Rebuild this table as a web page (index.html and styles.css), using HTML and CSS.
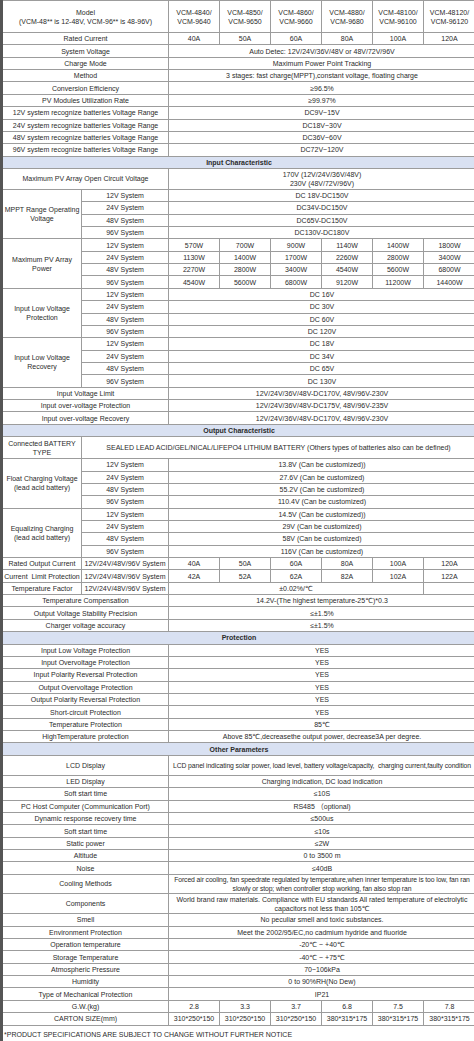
FILE: index.html
```
<!DOCTYPE html>
<html lang="en">
<head>
<meta charset="utf-8">
<title>VCM MPPT Controller Specifications</title>
<link rel="stylesheet" href="styles.css">
</head>
<body>
<table class="spec">
<colgroup>
<col class="c-a"><col class="c-b">
<col class="c-v"><col class="c-v"><col class="c-v"><col class="c-v"><col class="c-v"><col class="c-v2">
</colgroup>
<tbody>
<tr class="r-model"><td colspan="2">Model<br>(VCM-48** is 12-48V, VCM-96** is 48-96V)</td><td>VCM-4840/<br>VCM-9640</td><td>VCM-4850/<br>VCM-9650</td><td>VCM-4860/<br>VCM-9660</td><td>VCM-4880/<br>VCM-9680</td><td>VCM-48100/<br>VCM-96100</td><td>VCM-48120/<br>VCM-96120</td></tr>
<tr><td colspan="2">Rated Current</td><td>40A</td><td>50A</td><td>60A</td><td>80A</td><td>100A</td><td>120A</td></tr>
<tr><td colspan="2">System Voltage</td><td colspan="6">Auto Detec: 12V/24V/36V/48V or 48V/72V/96V</td></tr>
<tr><td colspan="2">Charge Mode</td><td colspan="6">Maximum Power Point Tracking</td></tr>
<tr><td colspan="2">Method</td><td colspan="6">3 stages: fast charge(MPPT),constant voltage, floating charge</td></tr>
<tr><td colspan="2">Conversion Efficiency</td><td colspan="6">≥96.5%</td></tr>
<tr><td colspan="2">PV Modules Utilization Rate</td><td colspan="6">≥99.97%</td></tr>
<tr><td colspan="2">12V system recognize batteries Voltage Range</td><td colspan="6">DC9V~15V</td></tr>
<tr><td colspan="2">24V system recognize batteries Voltage Range</td><td colspan="6">DC18V~30V</td></tr>
<tr><td colspan="2">48V system recognize batteries Voltage Range</td><td colspan="6">DC36V~60V</td></tr>
<tr><td colspan="2">96V system recognize batteries Voltage Range</td><td colspan="6">DC72V~120V</td></tr>
<tr class="sec"><td colspan="8">Input Characteristic</td></tr>
<tr class="r-21"><td colspan="2">Maximum PV Array Open Circuit Voltage</td><td colspan="6">170V (12V/24V/36V/48V)<br>230V (48V/72V/96V)</td></tr>
<tr><td rowspan="4">MPPT Range Operating<br>Voltage</td><td>12V System</td><td colspan="6">DC 18V-DC150V</td></tr>
<tr><td>24V System</td><td colspan="6">DC34V-DC150V</td></tr>
<tr><td>48V System</td><td colspan="6">DC65V-DC150V</td></tr>
<tr><td>96V System</td><td colspan="6">DC130V-DC180V</td></tr>
<tr><td rowspan="4">Maximum PV Array<br>Power</td><td>12V System</td><td>570W</td><td>700W</td><td>900W</td><td>1140W</td><td>1400W</td><td>1800W</td></tr>
<tr><td>24V System</td><td>1130W</td><td>1400W</td><td>1700W</td><td>2260W</td><td>2800W</td><td>3400W</td></tr>
<tr><td>48V System</td><td>2270W</td><td>2800W</td><td>3400W</td><td>4540W</td><td>5600W</td><td>6800W</td></tr>
<tr><td>96V System</td><td>4540W</td><td>5600W</td><td>6800W</td><td>9120W</td><td>11200W</td><td>14400W</td></tr>
<tr><td rowspan="4">Input Low Voltage<br>Protection</td><td>12V System</td><td colspan="6">DC 16V</td></tr>
<tr><td>24V System</td><td colspan="6">DC 30V</td></tr>
<tr><td>48V System</td><td colspan="6">DC 60V</td></tr>
<tr><td>96V System</td><td colspan="6">DC 120V</td></tr>
<tr><td rowspan="4">Input Low Voltage<br>Recovery</td><td>12V System</td><td colspan="6">DC 18V</td></tr>
<tr><td>24V System</td><td colspan="6">DC 34V</td></tr>
<tr><td>48V System</td><td colspan="6">DC 65V</td></tr>
<tr><td>96V System</td><td colspan="6">DC 130V</td></tr>
<tr><td colspan="2">Input Voltage Limit</td><td colspan="6">12V/24V/36V/48V-DC170V, 48V/96V-230V</td></tr>
<tr><td colspan="2">Input over-voltage Protection</td><td colspan="6">12V/24V/36V/48V-DC175V, 48V/96V-235V</td></tr>
<tr><td colspan="2">Input over-voltage Recovery</td><td colspan="6">12V/24V/36V/48V-DC170V, 48V/96V-230V</td></tr>
<tr class="sec"><td colspan="8">Output Characteristic</td></tr>
<tr class="r-22"><td>Connected BATTERY<br>TYPE</td><td colspan="7">SEALED LEAD ACID/GEL/NICAL/LIFEPO4 LITHIUM BATTERY (Others types of batteries also can be defined)</td></tr>
<tr><td rowspan="4">Float Charging Voltage<br>(lead acid battery)</td><td>12V System</td><td colspan="6">13.8V (Can be customized))</td></tr>
<tr><td>24V System</td><td colspan="6">27.6V (Can be customized)</td></tr>
<tr><td>48V System</td><td colspan="6">55.2V (Can be customized)</td></tr>
<tr><td>96V System</td><td colspan="6">110.4V (Can be customized)</td></tr>
<tr><td rowspan="4">Equalizing Charging<br>(lead acid battery)</td><td>12V System</td><td colspan="6">14.5V (Can be customized))</td></tr>
<tr><td>24V System</td><td colspan="6">29V (Can be customized)</td></tr>
<tr><td>48V System</td><td colspan="6">58V (Can be customized)</td></tr>
<tr><td>96V System</td><td colspan="6">116V (Can be customized)</td></tr>
<tr><td>Rated Output Current</td><td>12V/24V/48V/96V System</td><td>40A</td><td>50A</td><td>60A</td><td>80A</td><td>100A</td><td>120A</td></tr>
<tr><td>Current&nbsp; Limit Protection</td><td>12V/24V/48V/96V System</td><td>42A</td><td>52A</td><td>62A</td><td>82A</td><td>102A</td><td>122A</td></tr>
<tr><td>Temperature Factor</td><td>12V/24V/48V/96V System</td><td colspan="5">±0.02%/℃</td><td></td></tr>
<tr><td colspan="2">Temperature Compensation</td><td colspan="6">14.2V-(The highest temperature-25℃)*0.3</td></tr>
<tr><td colspan="2">Output Voltage Stability Precision</td><td colspan="6">≤±1.5%</td></tr>
<tr><td colspan="2">Charger voltage accuracy</td><td colspan="6">≤±1.5%</td></tr>
<tr class="sec"><td colspan="8">Protection</td></tr>
<tr><td colspan="2">Input Low Voltage Protection</td><td colspan="6">YES</td></tr>
<tr><td colspan="2">Input Overvoltage Protection</td><td colspan="6">YES</td></tr>
<tr><td colspan="2">Input Polarity Reversal Protection</td><td colspan="6">YES</td></tr>
<tr><td colspan="2">Output Overvoltage Protection</td><td colspan="6">YES</td></tr>
<tr><td colspan="2">Output Polarity Reversal Protection</td><td colspan="6">YES</td></tr>
<tr><td colspan="2">Short-circuit Protection</td><td colspan="6">YES</td></tr>
<tr><td colspan="2">Temperature Protection</td><td colspan="6">85℃</td></tr>
<tr><td colspan="2">HighTemperature protection</td><td colspan="6">Above 85℃,decreasethe output power, decrease3A per degree.</td></tr>
<tr class="sec"><td colspan="8">Other Parameters</td></tr>
<tr class="r-20"><td colspan="2">LCD Display</td><td colspan="6" class="tight">LCD panel indicating solar power, load level, battery voltage/capacity,&nbsp; charging current,faulty condition</td></tr>
<tr><td colspan="2">LED Display</td><td colspan="6">Charging indication, DC load indication</td></tr>
<tr><td colspan="2">Soft start time</td><td colspan="6">≤10S</td></tr>
<tr><td colspan="2">PC Host Computer (Communication Port)</td><td colspan="6">RS485 （optional)</td></tr>
<tr><td colspan="2">Dynamic response recovery time</td><td colspan="6">≤500us</td></tr>
<tr><td colspan="2">Soft start time</td><td colspan="6">≤10s</td></tr>
<tr><td colspan="2">Static power</td><td colspan="6">≤2W</td></tr>
<tr><td colspan="2">Altitude</td><td colspan="6">0 to 3500 m</td></tr>
<tr><td colspan="2">Noise</td><td colspan="6">≤40dB</td></tr>
<tr class="r-19"><td colspan="2">Cooling Methods</td><td colspan="6" class="tight">Forced air cooling, fan speedrate regulated by temperature,when inner temperature is too low, fan ran<br>slowly or stop; when controller stop working, fan also stop ran</td></tr>
<tr class="r-20"><td colspan="2">Components</td><td colspan="6">World brand raw materials. Compliance with EU standards All rated temperature of electrolytic<br>capacitors not less than 105℃</td></tr>
<tr><td colspan="2">Smell</td><td colspan="6">No peculiar smell and toxic substances.</td></tr>
<tr><td colspan="2">Environment Protection</td><td colspan="6">Meet the 2002/95/EC,no cadmium hydride and fluoride</td></tr>
<tr><td colspan="2">Operation temperature</td><td colspan="6">-20℃ ~ +40℃</td></tr>
<tr><td colspan="2">Storage Temperature</td><td colspan="6">-40℃ ~ +75℃</td></tr>
<tr><td colspan="2">Atmospheric Pressure</td><td colspan="6">70~106kPa</td></tr>
<tr><td colspan="2">Humidity</td><td colspan="6">0 to 90%RH(No Dew)</td></tr>
<tr><td colspan="2">Type of Mechanical Protection</td><td colspan="6">IP21</td></tr>
<tr><td colspan="2">G.W.(kg)</td><td>2.8</td><td>3.3</td><td>3.7</td><td>6.8</td><td>7.5</td><td>7.8</td></tr>
<tr><td colspan="2">CARTON SIZE(mm)</td><td>310*250*150</td><td>310*250*150</td><td>310*250*150</td><td>380*315*175</td><td>380*315*175</td><td>380*315*175</td></tr>
<tr class="r-foot"><td colspan="8" class="note">*PRODUCT SPECIFICATIONS ARE SUBJECT TO CHANGE WITHOUT FURTHER NOTICE</td></tr>
</tbody>
</table>
</body>
</html>
```
FILE: styles.css
```
body {
  margin: 0;
  background: #ffffff;
}

.spec {
  border-collapse: collapse;
  table-layout: fixed;
  width: 474px;
  font-family: "Liberation Sans", Arial, "DejaVu Sans", "Noto Sans CJK SC", sans-serif;
  font-size: 7px;
  line-height: 9px;
  color: #2b2b2b;
  border-left: 3px solid #555555;
}

.c-a { width: 80px; }
.c-b { width: 87px; }
.c-v { width: 51px; }
.c-v2 { width: 52px; }

.spec tr { height: 12.37px; }
.spec tr.r-model { height: 32px; }
.spec tr.r-21 { height: 21px; }
.spec tr.r-22 { height: 22px; }
.spec tr.r-20 { height: 20.2px; }
.spec tr.r-19 { height: 19.3px; }
.spec tr.r-foot { height: 18px; }

.spec td {
  border: 1px solid #9c9c9c;
  padding: 0;
  text-align: center;
  vertical-align: middle;
  white-space: nowrap;
}

.spec tr.sec td {
  background: #d9e1f2;
  font-weight: bold;
}

.spec td.tight {
  font-size: 6.8px;
  letter-spacing: -0.1px;
}

.spec td.note {
  text-align: left;
  padding-left: 1px;
}
```
